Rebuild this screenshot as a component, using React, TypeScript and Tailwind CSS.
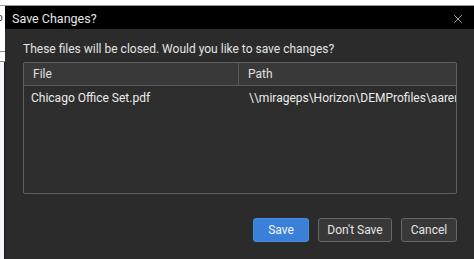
import { X } from 'lucide-react';

const font = { fontFamily: 'Roboto, "Noto Sans", "Liberation Sans", sans-serif' };

const files = [
    { name: 'Chicago Office Set.pdf', path: '\\\\mirageps\\Horizon\\DEMProfiles\\aarendt\\Documents' },
];

export default function App() {
    return (
        <div className="flex flex-col w-[474px] h-[259px] bg-white overflow-hidden" style={font}>
            <div className="h-[6px] shrink-0 bg-white border-b border-[#9a9a9a]" />
            <div className="flex w-[474px] flex-1 min-h-0">
                {/* window behind the dialog */}
                <div className="w-[5px] shrink-0 flex flex-col bg-white overflow-hidden">
                    <div className="h-[24px] text-[10px] leading-[24px] text-[#333] -ml-[3px]">o</div>
                    <div className="h-[22px] border-b border-[#888]" />
                    <div className="h-[10px] border-b border-[#888]" />
                    <div className="flex-1 bg-[#f4f4fa] border-r border-[#1a1a2a]" />
                </div>
                <div className="w-[469px] shrink-0 flex flex-col bg-[#2b2b2b] overflow-hidden">
                    <div className="h-[23px] shrink-0 bg-black flex items-center justify-between pl-[7px] pr-[9px]">
                        <span className="text-[12.5px] leading-[15px] mt-[2px] text-[#e6e6e6]">Save Changes?</span>
                        <X size={14} strokeWidth={1.3} className="text-[#d8d8d8] mt-[2px]" />
                    </div>
                    <div className="flex-1 flex flex-col pl-[18px] pr-[17px] pt-[13px]">
                        <p className="text-[12px] leading-[14px] text-[#e4e4e4]">
                            These files will be closed. Would you like to save changes?
                        </p>
                        <div className="mt-[6px] w-[434px] h-[132px] border border-[#606060] rounded-[2px] bg-[#2d2d2d] overflow-hidden">
                            <div className="flex h-[23px] bg-[#393939] border-b border-[#5a5a5a] text-[12px] text-[#e0e0e0]">
                                <div className="w-[215px] shrink-0 border-r border-[#5a5a5a] flex items-center pl-[9px]">File</div>
                                <div className="w-[217px] flex items-center pl-[9px]">Path</div>
                            </div>
                            {files.map((f) => (
                                <div key={f.name} className="flex h-[24px] text-[12px] text-[#ececec]">
                                    <div className="w-[216px] shrink-0 flex items-center pl-[7px] whitespace-nowrap">{f.name}</div>
                                    <div className="w-[216px] shrink-0 pl-[9px] leading-[24px] whitespace-nowrap overflow-hidden">{f.path}</div>
                                </div>
                            ))}
                        </div>
                        <div className="flex w-[434px] justify-end gap-[9px] mt-[24px]">
                            <button className="w-[56px] h-[24px] rounded-[3px] bg-[#3b80d8] border border-[#4a8de0] text-[12px] text-[#f2f6fc]">
                                Save
                            </button>
                            <button className="w-[74px] h-[24px] rounded-[3px] bg-[#383838] border border-[#666] text-[12px] text-[#e4e4e4]">
                                Don't Save
                            </button>
                            <button className="w-[56px] h-[24px] rounded-[3px] bg-[#383838] border border-[#666] text-[12px] text-[#e4e4e4]">
                                Cancel
                            </button>
                        </div>
                    </div>
                </div>
            </div>
        </div>
    );
}
